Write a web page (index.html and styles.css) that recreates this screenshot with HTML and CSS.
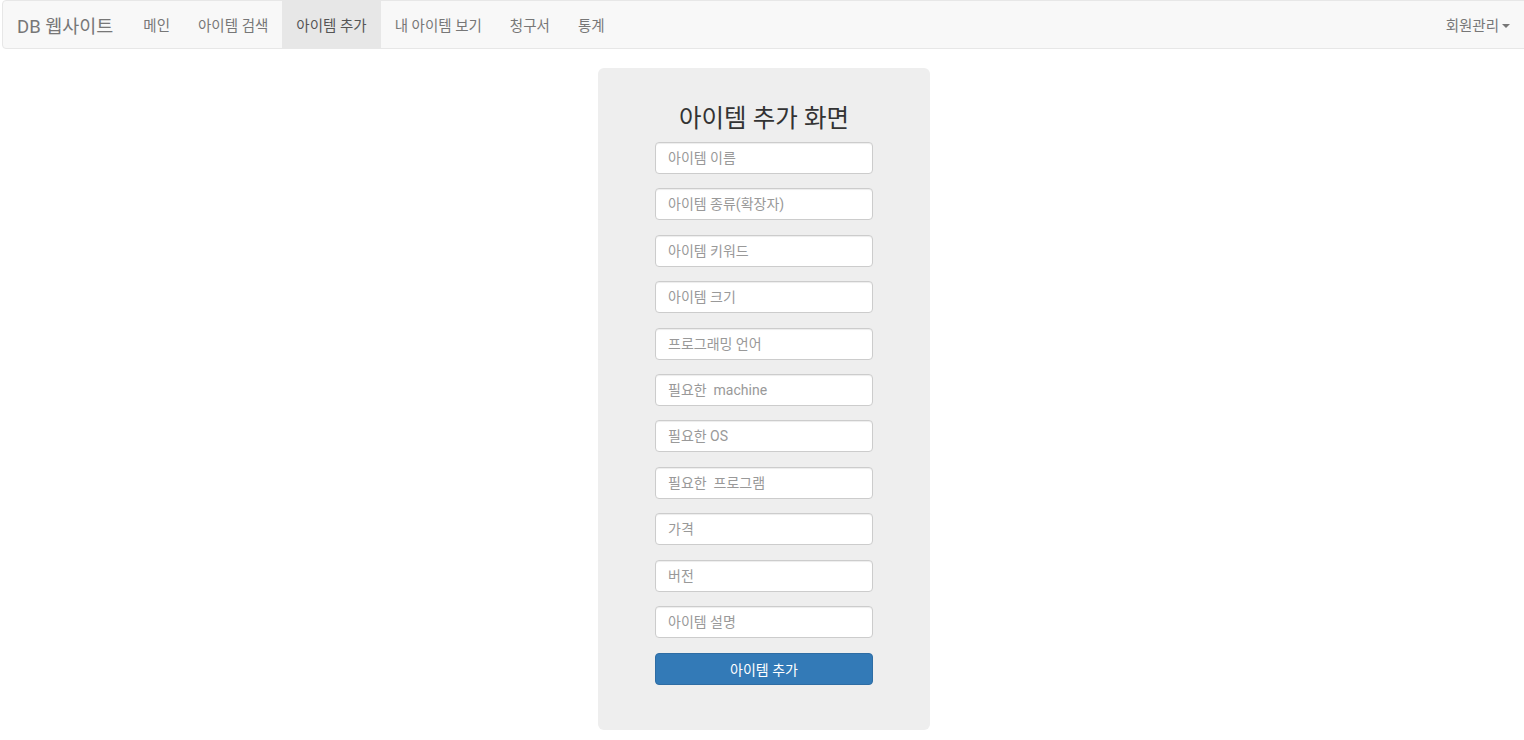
FILE: index.html
```html
<!DOCTYPE html>
<html lang="ko">
<head>
  <meta charset="UTF-8">
  <title>DB 웹사이트 - 아이템 추가</title>
  <link rel="stylesheet" href="styles.css">
</head>
<body>

  <nav class="navbar">
    <a class="brand" href="#">DB 웹사이트</a>
    <ul class="nav">
      <li><a href="#">메인</a></li>
      <li><a href="#">아이템 검색</a></li>
      <li class="active"><a href="#">아이템 추가</a></li>
      <li><a href="#">내 아이템 보기</a></li>
      <li><a href="#">청구서</a></li>
      <li><a href="#">통계</a></li>
    </ul>
    <ul class="nav nav-right">
      <li><a href="#">회원관리<span class="caret"></span></a></li>
    </ul>
  </nav>

  <div class="box">
    <form class="item-form">
      <h3 class="title">아이템 추가 화면</h3>
      <input type="text" class="field" placeholder="아이템 이름">
      <input type="text" class="field" placeholder="아이템 종류(확장자)">
      <input type="text" class="field" placeholder="아이템 키워드">
      <input type="text" class="field" placeholder="아이템 크기">
      <input type="text" class="field" placeholder="프로그래밍 언어">
      <input type="text" class="field" placeholder="필요한  machine">
      <input type="text" class="field" placeholder="필요한 OS">
      <input type="text" class="field" placeholder="필요한  프로그램">
      <input type="text" class="field" placeholder="가격">
      <input type="text" class="field" placeholder="버전">
      <input type="text" class="field" placeholder="아이템 설명">
      <button type="button" class="btn">아이템 추가</button>
    </form>
  </div>

</body>
</html>
```

FILE: styles.css
```css
body { margin: 0; font-family: Roboto, "Noto Sans CJK KR", sans-serif; color: #333; background: #fff; }
a { text-decoration: none; }

.navbar { display: flex; height: 47px; margin: 0 -4px 0 2px; background: #f8f8f8; border: 1px solid #e7e7e7; border-radius: 4px; }
.brand { display: flex; align-items: center; padding: 0 16px 0 14px; font-size: 18.5px; color: #777; }
.nav { display: flex; list-style: none; margin: 0; padding: 0; }
.nav li a { display: flex; align-items: center; height: 47px; padding: 0 14px; font-size: 14.5px; color: #777; }
.nav li.active a { background: #e7e7e7; color: #555; }
.nav-right { margin-left: auto; margin-right: 4px; }
.nav-right li a { padding-right: 13px; }
.caret { display: inline-block; width: 0; height: 0; margin-left: 3px; margin-top: 2px; border-top: 4px solid #777; border-left: 4px solid transparent; border-right: 4px solid transparent; }

.box { width: 332px; margin: 19px 0 0 calc(50% - 164px); padding: 33px 0 45px; background: #eee; border-radius: 6px; box-sizing: border-box; }
.item-form { width: 218px; margin: 0 auto; display: flex; flex-direction: column; }
.title { margin: 0 0 5px; text-align: center; font-size: 24.5px; font-weight: 400; line-height: 36px; color: #333; }
.field { height: 32px; margin-bottom: 14.4px; padding: 0 12px; box-sizing: border-box; border: 1px solid #ccc; border-radius: 4px; background: #fff; font-family: inherit; font-size: 14px; color: #555; box-shadow: inset 0 1px 1px rgba(0,0,0,.075); }
.field:last-of-type { margin-bottom: 15px; }
.field::placeholder { color: #999; }
.btn { height: 32px; border: 1px solid #2e6da4; border-radius: 4px; background: #337ab7; color: #fff; font-family: inherit; font-size: 14px; cursor: pointer; }
```
